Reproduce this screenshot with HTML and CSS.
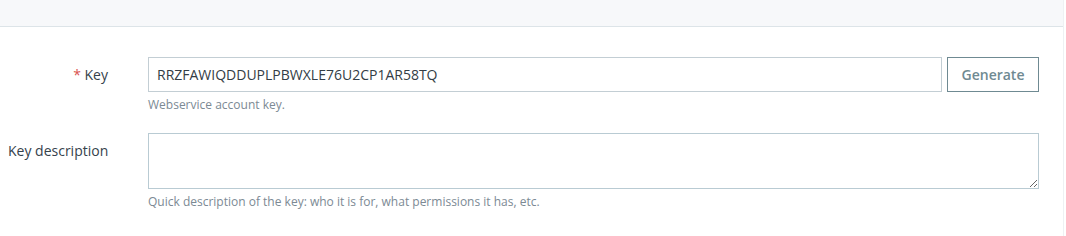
FILE: index.html
```html
<!DOCTYPE html>
<html>
<head>
<meta charset="utf-8">
<link rel="stylesheet" href="styles.css">
</head>
<body>
<div class="page">
  <div class="topbar"></div>
  <form class="form">
    <div class="row">
      <label class="label" for="key"><span class="req">*</span> Key</label>
      <div class="field">
        <div class="group">
          <input id="key" class="input" type="text" value="RRZFAWIQDDUPLPBWXLE76U2CP1AR58TQ">
          <button type="button" class="btn">Generate</button>
        </div>
        <div class="help">Webservice account key.</div>
      </div>
    </div>
    <div class="row">
      <label class="label" for="desc">Key description</label>
      <div class="field">
        <textarea id="desc" class="textarea"></textarea>
        <div class="help">Quick description of the key: who it is for, what permissions it has, etc.</div>
      </div>
    </div>
  </form>
</div>
</body>
</html>
```
FILE: styles.css
```css
* { box-sizing: border-box; }
html, body { margin: 0; padding: 0; background: #fff; }
body {
  font-family: "Open Sans", "Noto Sans", sans-serif;
  font-size: 14px;
  color: #3a4650;
}
.page {
  width: 1064px;
  height: 236px;
  border-right: 1px solid #eef1f3;
}
.topbar {
  height: 27px;
  background: #f7f8fa;
  border-bottom: 1px solid #dde4e8;
}
.form {
  padding: 30px 24px 0 8px;
}
.row {
  display: grid;
  grid-template-columns: 100px 891px;
  column-gap: 40px;
  margin-bottom: 20px;
}
.label {
  text-align: right;
  line-height: 35px;
  white-space: nowrap;
  color: #35424c;
}
.row:nth-child(2) .label { line-height: 36px; }
.req { color: #d9534f; }
.group {
  display: flex;
  gap: 5px;
}
.input {
  flex: 1;
  height: 35px;
  border: 1px solid #c3ced4;
  padding: 0 8px;
  font: inherit;
  font-size: 14px;
  color: #333d45;
  outline: none;
}
.btn {
  width: 92px;
  height: 35px;
  background: #fff;
  border: 1px solid #6f8a92;
  color: #6f8a92;
  font: inherit;
  font-size: 14px;
  font-weight: 600;
  padding: 0;
}
.textarea {
  display: block;
  width: 891px;
  height: 56px;
  border: 1px solid #b9cbd3;
  font: inherit;
  resize: vertical;
  outline: none;
}
.help {
  margin-top: 4px;
  font-size: 12px;
  line-height: 17px;
  color: #7c8a94;
}
```
